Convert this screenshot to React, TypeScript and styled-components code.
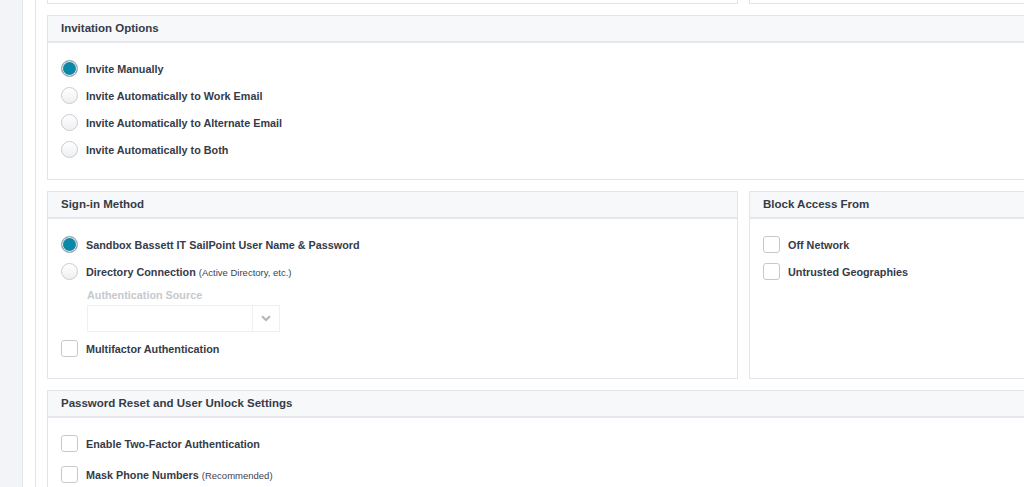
import React from "react";
import styled, { createGlobalStyle } from "styled-components";

const Global = createGlobalStyle`
  html, body { margin: 0; padding: 0; background: #fff; overflow: hidden; }
  body { font-family: "Liberation Sans", Arial, sans-serif; color: #343a46; }
`;

const Page = styled.div`
  display: flex;
  height: 487px;
  width: 1024px;
  overflow: hidden;
`;

const Sidebar = styled.div`
  flex: 0 0 22px;
  background: #f3f4f8;
  border-right: 1px solid #e2e5ec;
`;

const Gutter = styled.div`
  flex: 0 0 12px;
  border-right: 1px solid #e2e5ec;
`;

const Main = styled.div`
  flex: 0 0 1200px;
  padding-left: 11px;
  display: flex;
  flex-direction: column;
  gap: 11px;
  & > * { flex-shrink: 0; }
`;

const Row = styled.div`
  display: grid;
  grid-template-columns: 691px 1fr;
  gap: 11px;
`;

const Stub = styled.div`
  height: 3px;
  border: 1px solid #e1e4eb;
  border-top: none;
`;

const Card = styled.section<{ $h: number }>`
  height: ${(p) => p.$h}px;
  box-sizing: border-box;
  border: 1px solid #e1e4eb;
  background: #fff;
  display: flex;
  flex-direction: column;
`;

const CardHeader = styled.header`
  height: 27px;
  box-sizing: border-box;
  flex: 0 0 auto;
  background: #f7f8fa;
  border-bottom: 2px solid #e4e7ee;
  padding: 0 0 1px 13px;
  display: flex;
  align-items: center;
  font-size: 11.5px;
  font-weight: bold;
  color: #353b48;
`;

const CardBody = styled.div`
  padding: 12px 13px 0 13px;
  display: flex;
  flex-direction: column;
`;

const Option = styled.label<{ $h?: number }>`
  height: ${(p) => p.$h ?? 27}px;
  display: flex;
  align-items: center;
  gap: 8px;
  font-size: 10.8px;
  font-weight: bold;
  color: #353b48;
`;

const Radio = styled.span<{ $on?: boolean }>`
  width: 17px;
  height: 17px;
  box-sizing: border-box;
  border-radius: 50%;
  flex: 0 0 auto;
  border: 1px solid ${(p) => (p.$on ? "#a4aab3" : "#c9ccd1")};
  background: ${(p) =>
    p.$on ? "#0a88a6" : "linear-gradient(#ffffff, #eeeff1)"};
  box-shadow: ${(p) => (p.$on ? "inset 0 0 0 1px #e8eef2" : "none")};
`;

const Check = styled.span`
  width: 17px;
  height: 17px;
  box-sizing: border-box;
  border-radius: 3px;
  flex: 0 0 auto;
  border: 1px solid #c6c9ce;
  background: #fff;
`;

const Note = styled.span`
  font-weight: normal;
  font-size: 9.5px;
  margin-left: 3px;
  color: #3c4250;
`;

const SubField = styled.div`
  padding-left: 26px;
  display: flex;
  flex-direction: column;
  gap: 3px;
  margin-top: 3px;
  margin-bottom: 3px;
`;

const FieldLabel = styled.div`
  font-size: 10.8px;
  font-weight: bold;
  color: #c6c9ce;
  height: 14px;
  line-height: 14px;
`;

const Select = styled.div`
  width: 193px;
  height: 27px;
  box-sizing: border-box;
  border: 1px solid #eef0f2;
  display: flex;
`;

const SelectValue = styled.div`
  flex: 1;
`;

const SelectArrow = styled.div`
  width: 26px;
  border-left: 1px solid #eef0f2;
  display: flex;
  align-items: center;
  justify-content: center;
`;

const Chevron = () => (
  <svg width="10" height="7" viewBox="0 0 10 7">
    <path d="M1 1.2 L5 5 L9 1.2" stroke="#b4b6ba" strokeWidth="2.2" fill="none" />
  </svg>
);

export default function App() {
  return (
    <>
      <Global />
      <Page>
        <Sidebar />
        <Gutter />
        <Main>
          <Row>
            <Stub />
            <Stub />
          </Row>
          <Card $h={165}>
            <CardHeader>Invitation Options</CardHeader>
            <CardBody>
              <Option>
                <Radio $on />
                Invite Manually
              </Option>
              <Option>
                <Radio />
                Invite Automatically to Work Email
              </Option>
              <Option>
                <Radio />
                Invite Automatically to Alternate Email
              </Option>
              <Option>
                <Radio />
                Invite Automatically to Both
              </Option>
            </CardBody>
          </Card>
          <Row>
            <Card $h={188}>
              <CardHeader>Sign-in Method</CardHeader>
              <CardBody>
                <Option>
                  <Radio $on />
                  Sandbox Bassett IT SailPoint User Name &amp; Password
                </Option>
                <Option>
                  <Radio />
                  <span>
                    Directory Connection<Note>(Active Directory, etc.)</Note>
                  </span>
                </Option>
                <SubField>
                  <FieldLabel>Authentication Source</FieldLabel>
                  <Select>
                    <SelectValue />
                    <SelectArrow>
                      <Chevron />
                    </SelectArrow>
                  </Select>
                </SubField>
                <Option>
                  <Check />
                  Multifactor Authentication
                </Option>
              </CardBody>
            </Card>
            <Card $h={188}>
              <CardHeader>Block Access From</CardHeader>
              <CardBody>
                <Option>
                  <Check />
                  Off Network
                </Option>
                <Option>
                  <Check />
                  Untrusted Geographies
                </Option>
              </CardBody>
            </Card>
          </Row>
          <Card $h={120}>
            <CardHeader>Password Reset and User Unlock Settings</CardHeader>
            <CardBody>
              <Option $h={27}>
                <Check />
                Enable Two-Factor Authentication
              </Option>
              <Option $h={35}>
                <Check />
                <span>
                  Mask Phone Numbers<Note>(Recommended)</Note>
                </span>
              </Option>
            </CardBody>
          </Card>
        </Main>
      </Page>
    </>
  );
}
